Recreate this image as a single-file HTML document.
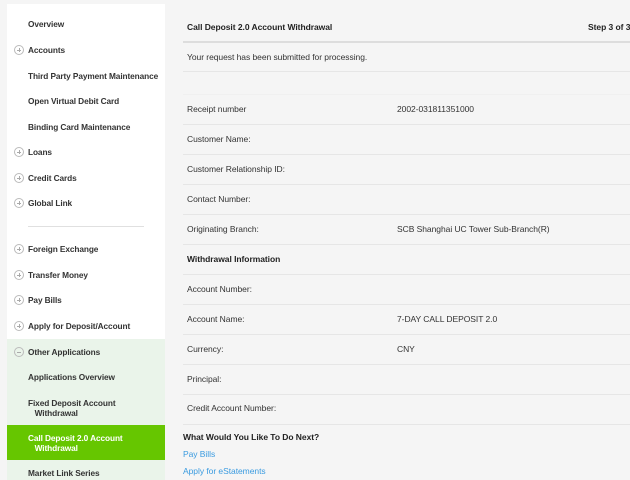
<!DOCTYPE html><html><head><style>
body{margin:0;width:630px;height:480px;background:#f5f5f5;font-family:"Liberation Sans",sans-serif;overflow:hidden;position:relative;color:#333}
.sb{position:absolute;left:7px;top:4px;width:158px;height:476px;background:#fff}
.g{position:absolute;left:7px;top:339px;width:158px;height:141px;background:#eaf4ea}
.act{position:absolute;left:7px;top:425px;width:158px;height:35px;background:#66c600}
.it{position:absolute;left:28px;font-size:8.3px;letter-spacing:-0.1px;font-weight:bold;color:#333;line-height:10px;white-space:nowrap}
.ic{position:absolute;left:14px;width:10px;height:10px;border:1px solid #bbb;border-radius:50%;box-sizing:border-box}
.ic:before{content:"";position:absolute;left:2px;top:3.6px;width:4px;height:0.8px;background:#aaa}
.ic.p:after{content:"";position:absolute;left:3.6px;top:2px;width:0.8px;height:4px;background:#aaa}
.t{position:absolute;font-size:8.5px;letter-spacing:-0.05px;white-space:nowrap;line-height:10px}
.l{position:absolute;left:183px;right:0;height:1px;background:#e6e6e6}
</style></head><body>
<div class="sb"></div><div class="g"></div><div class="act"></div>
<div class="it" style="top:19px">Overview</div>
<div class="ic p" style="top:45px"></div><div class="it" style="top:45px">Accounts</div>
<div class="it" style="top:71px">Third Party Payment Maintenance</div>
<div class="it" style="top:96px">Open Virtual Debit Card</div>
<div class="it" style="top:122px">Binding Card Maintenance</div>
<div class="ic p" style="top:147px"></div><div class="it" style="top:147px">Loans</div>
<div class="ic p" style="top:173px"></div><div class="it" style="top:173px">Credit Cards</div>
<div class="ic p" style="top:198px"></div><div class="it" style="top:198px">Global Link</div>
<div style="position:absolute;left:28px;top:226px;width:116px;height:1px;background:#e0e0e0"></div>
<div class="ic p" style="top:244px"></div><div class="it" style="top:244px">Foreign Exchange</div>
<div class="ic p" style="top:270px"></div><div class="it" style="top:270px">Transfer Money</div>
<div class="ic p" style="top:295px"></div><div class="it" style="top:295px">Pay Bills</div>
<div class="ic p" style="top:321px"></div><div class="it" style="top:321px">Apply for Deposit/Account</div>
<div class="ic" style="top:347px"></div><div class="it" style="top:347px">Other Applications</div>
<div class="it" style="top:372px">Applications Overview</div>
<div class="it" style="top:398px">Fixed Deposit Account<br>&nbsp;&nbsp;&nbsp;Withdrawal</div>
<div class="it" style="top:433px;color:#fff">Call Deposit 2.0 Account<br>&nbsp;&nbsp;&nbsp;Withdrawal</div>
<div class="it" style="top:468px">Market Link Series</div>

<div class="t" style="left:187px;top:22px;font-weight:bold;color:#222">Call Deposit 2.0 Account Withdrawal</div>
<div class="t" style="left:588px;top:22px;font-weight:bold;color:#222">Step 3 of 3</div>
<div class="l" style="top:41px;height:2px;background:#ddd"></div>
<div class="t" style="left:187px;top:52px">Your request has been submitted for processing.</div>
<div class="l" style="top:71px"></div>
<div class="l" style="top:94px;background:#f0f0f0"></div>
<div class="t" style="left:187px;top:104px">Receipt number</div><div class="t" style="left:397px;top:104px">2002-031811351000</div>
<div class="l" style="top:124px"></div>
<div class="t" style="left:187px;top:134px">Customer Name:</div>
<div class="l" style="top:154px"></div>
<div class="t" style="left:187px;top:164px">Customer Relationship ID:</div>
<div class="l" style="top:184px"></div>
<div class="t" style="left:187px;top:194px">Contact Number:</div>
<div class="l" style="top:214px"></div>
<div class="t" style="left:187px;top:224px">Originating Branch:</div><div class="t" style="left:397px;top:224px">SCB Shanghai UC Tower Sub-Branch(R)</div>
<div class="l" style="top:244px"></div>
<div class="t" style="left:187px;top:254px;font-weight:bold;color:#222">Withdrawal Information</div>
<div class="l" style="top:274px"></div>
<div class="t" style="left:187px;top:284px">Account Number:</div>
<div class="l" style="top:304px"></div>
<div class="t" style="left:187px;top:314px">Account Name:</div><div class="t" style="left:397px;top:314px">7-DAY CALL DEPOSIT 2.0</div>
<div class="l" style="top:334px"></div>
<div class="t" style="left:187px;top:344px">Currency:</div><div class="t" style="left:397px;top:344px">CNY</div>
<div class="l" style="top:364px"></div>
<div class="t" style="left:187px;top:374px">Principal:</div>
<div class="l" style="top:394px"></div>
<div class="t" style="left:187px;top:403px">Credit Account Number:</div>
<div class="l" style="top:424px"></div>
<div class="t" style="left:183px;top:432px;font-weight:bold;color:#222">What Would You Like To Do Next?</div>
<div class="t" style="left:183px;top:449px;color:#3a9be0">Pay Bills</div>
<div class="t" style="left:183px;top:466px;color:#3a9be0">Apply for eStatements</div>
</body></html>
